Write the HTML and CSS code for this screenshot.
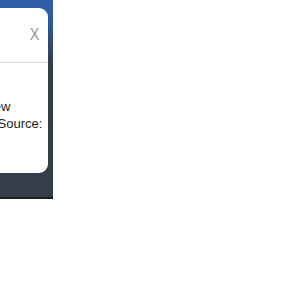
FILE: index.html
```html
<!DOCTYPE html>
<html lang="en">
<head>
    <meta charset="UTF-8">
    <title>Dialog</title>
    <link rel="stylesheet" href="styles.css">
</head>
<body>
    <div class="panel">
        <div class="dialog">
            <div class="dialog-header">
                <span class="close">X</span>
            </div>
            <div class="dialog-body">
                <p>and view<br>HTML Source:</p>
            </div>
        </div>
    </div>
</body>
</html>
```

FILE: styles.css
```css
* {
    margin: 0;
    padding: 0;
    box-sizing: border-box;
}

body {
    background-color: #fff;
    font-family: "Liberation Sans", Arial, sans-serif;
}

/* Dark backdrop behind the dialog */
.panel {
    width: 53px;
    height: 199px;
    overflow: hidden;
    background: linear-gradient(#2d5ea8 0, #2e5b9f 22px, #343d4c 62px, #353c4a 100%);
    border-bottom: 2px solid #1b2029;
    padding-top: 8px;
}

.dialog {
    width: 120px;
    height: 165px;
    margin-left: -72px;
    background-color: #fff;
    border-radius: 0 9px 9px 0;
}

.dialog-header {
    height: 55px;
    border-bottom: 1px solid #d4d4d4;
    display: flex;
    justify-content: flex-end;
    padding: 17px 8px 0 0;
}

.close {
    font-size: 17px;
    line-height: 20px;
    color: #959595;
    transform: scaleX(0.85);
}

.dialog-body {
    padding: 35px 16px 0 31px;
}

.dialog-body p {
    font-size: 13px;
    line-height: 17px;
    color: #222;
    white-space: nowrap;
}
```
